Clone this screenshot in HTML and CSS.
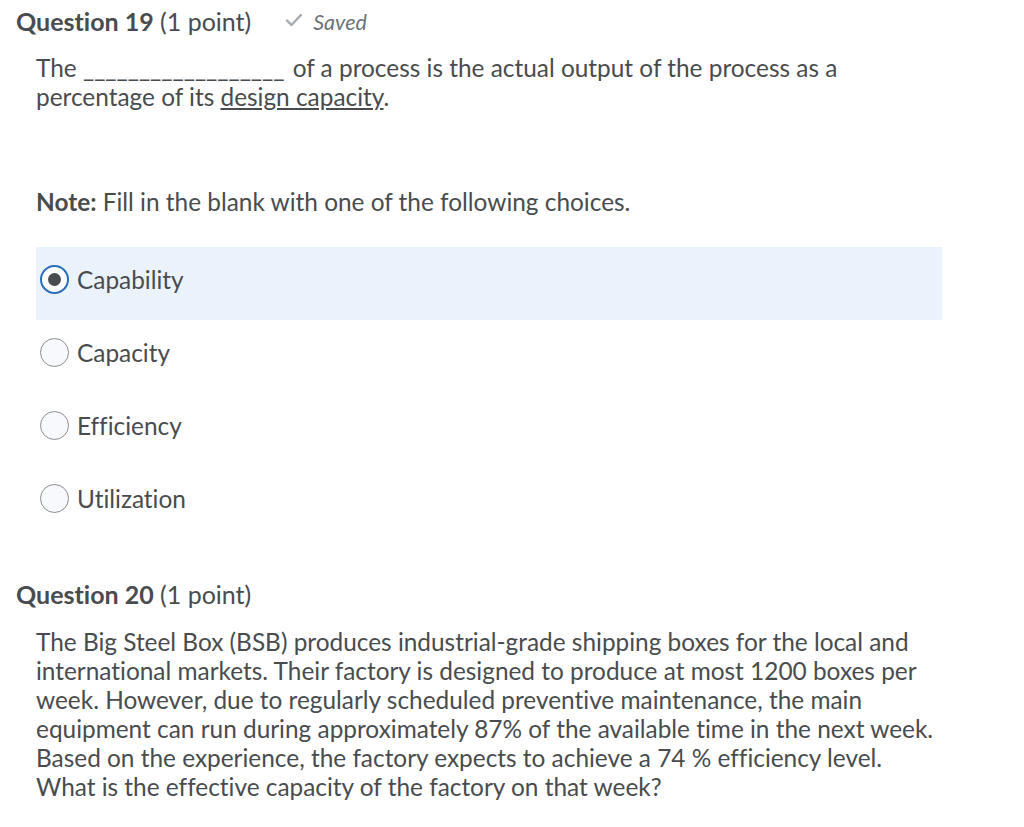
FILE: index.html
```html
<!DOCTYPE html>
<html>
<head>
<meta charset="utf-8">
<link rel="stylesheet" href="styles.css">
</head>
<body>
<div class="page">
  <section class="question">
    <div class="q-head">
      <h2 class="q-title"><b>Question 19</b> (1 point)</h2>
      <span class="saved">
        <svg class="check" width="18" height="14" viewBox="0 0 18 14"><path d="M2 7.5 L6.5 12 L16 2" fill="none" stroke="#a6abaf" stroke-width="2.4" stroke-linecap="round" stroke-linejoin="round"/></svg>
        <i>Saved</i>
      </span>
    </div>
    <div class="q-body">
      <p class="stem">The <span class="blank">__________________</span> of a process is the actual output of the process as a percentage of its <u>design capacity</u>.</p>
      <p class="note"><b>Note:</b> Fill in the blank with one of the following choices.</p>
    </div>
    <div class="choices">
      <label class="choice selected"><span class="radio checked"><span class="dot"></span></span><span class="label">Capability</span></label>
      <label class="choice"><span class="radio"></span><span class="label">Capacity</span></label>
      <label class="choice"><span class="radio"></span><span class="label">Efficiency</span></label>
      <label class="choice"><span class="radio"></span><span class="label">Utilization</span></label>
    </div>
  </section>
  <section class="question q2">
    <div class="q-head">
      <h2 class="q-title"><b>Question 20</b> (1 point)</h2>
    </div>
    <div class="q-body">
      <p class="stem">The Big Steel Box (BSB) produces industrial-grade shipping boxes for the local and international markets. Their factory is designed to produce at most 1200 boxes per week. However, due to regularly scheduled preventive maintenance, the main equipment can run during approximately 87% of the available time in the next week. Based on the experience, the factory expects to achieve a 74 % efficiency level. What is the effective capacity of the factory on that week?</p>
    </div>
  </section>
</div>
</body>
</html>
```
FILE: styles.css
```css
html, body {
  margin: 0;
  padding: 0;
  background: #ffffff;
}
body {
  font-family: Lato, "Open Sans", "Liberation Sans", sans-serif;
  color: #494c4e;
  font-size: 24.4px;
  line-height: 29px;
  font-variant-ligatures: none;
}
.page {
  padding: 5px 0 0 16px;
  width: 926px;
}
.q-head {
  display: flex;
  align-items: baseline;
  gap: 34px;
}
.q-title {
  margin: 0;
  font-size: 25px;
  font-weight: 400;
  line-height: 32px;
}
.q-title b {
  font-weight: 700;
}
.saved {
  font-size: 21.5px;
  color: #6e7376;
  display: inline-flex;
  align-items: center;
  gap: 10px;
  position: relative;
  top: -2px;
}
.check {
  position: relative;
  top: -2px;
}
.q-body {
  padding-left: 20px;
}
.stem {
  margin: 14px 0 0 0;
  width: 880px;
}
.q2 .stem {
  width: 905px;
  margin-top: 17px;
}
.blank {
  margin-right: 2px;
}
.note {
  margin: 76px 0 0 0;
}
.choices {
  margin-top: 31px;
  padding-left: 20px;
}
.choice {
  display: flex;
  align-items: center;
  gap: 8px;
  height: 73px;
  padding-left: 4px;
}
.choice.selected {
  background: #eaf3fc;
}
.radio {
  width: 27px;
  height: 27px;
  border-radius: 50%;
  border: 1.5px solid #8a8d8f;
  background: #f8f9fd;
  display: flex;
  align-items: center;
  justify-content: center;
  box-sizing: content-box;
  position: relative;
  top: -4px;
}
.label {
  position: relative;
  top: -4px;
}
.radio.checked {
  border: 2.5px solid #2a6ebb;
  width: 25px;
  height: 25px;
  background: #ffffff;
}
.dot {
  width: 13px;
  height: 13px;
  border-radius: 50%;
  background: #494c4e;
}
.q2 {
  margin-top: 39px;
}
```
